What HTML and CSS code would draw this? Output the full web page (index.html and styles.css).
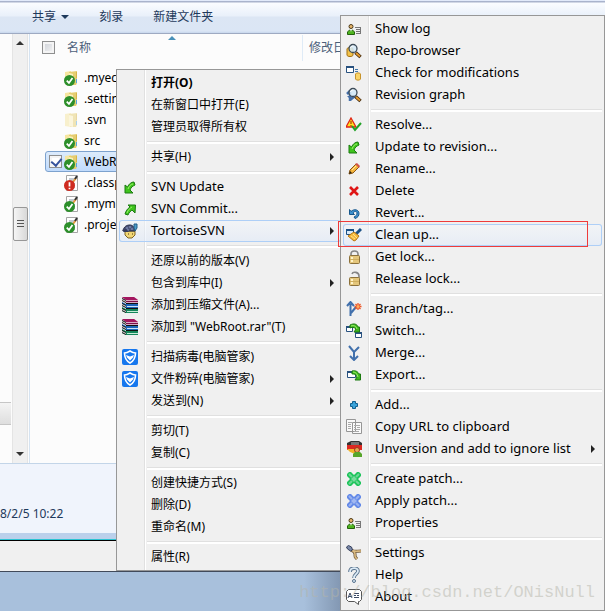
FILE: index.html
```html
<!DOCTYPE html>
<html lang="zh-CN">

<head>
    <meta charset="UTF-8">
    <meta name="viewport" content="width=device-width, initial-scale=1.0">
    <title>TortoiseSVN 右键菜单</title>
    <link rel="stylesheet" href="styles.css">
</head>

<body>
    <!-- 图标 -->
    <svg class="sprite" width="0" height="0">
        <symbol id="ok" viewBox="0 0 10 10">
            <circle cx="5" cy="5" r="5" fill="#2d8f2b"/>
            <path d="M2.5 5.2l2 2 3.2-4.4" fill="none" stroke="#fff" stroke-width="1.6"/>
        </symbol>
        <symbol id="folder" viewBox="0 0 14 16">
            <path d="M1 2l6-1v14l-6-1z" fill="#f6e6a0"/>
            <path d="M5 2l8-1v12l-1 2H6z" fill="#e6cd70"/>
            <path d="M5 3l4 1v11l-4-1z" fill="#fbf0bd"/>
            <path d="M12 9h1v4h-1z" fill="#5aa7e0"/>
            <path d="M12 2h1v6h-1z" fill="#d5b44c"/>
        </symbol>
        <symbol id="doc" viewBox="0 0 14 16">
            <path d="M2.500.5h11v15h-11z" fill="#fff" stroke="#a5a5a5"/>
            <path d="M5 4h6M5 6h4M5 9h6M5 12h6" stroke="#8795a5"/>
            <path d="M6 11l6-8" stroke="#e0993c" stroke-width="2"/>
            <path d="M11 4l2-3" stroke="#333" stroke-width="2"/>
        </symbol>
        <symbol id="update" viewBox="0 0 16 16">
            <path d="M3 6v8h8l-3-3c1-3 3-4 5-5l-1-3C9 3 7 5 5.500 8z" fill="#3fc41c" stroke="#1b7a10"/>
            <path d="M6 10c1-3 3-5 5-5" fill="none" stroke="#9cf26a"/>
        </symbol>
        <symbol id="commit" viewBox="0 0 16 16">
            <path d="M13.500 4H6l2 2c-3 2-4 4-5 7l3 1c1-3 3-4 4-5l3 3z" fill="#3fc41c" stroke="#1b7a10"/>
            <path d="M5 12c1-3 3-5 5-6" fill="none" stroke="#9cf26a"/>
        </symbol>
        <symbol id="tortoise" viewBox="0 0 16 16">
            <path d="M3 8h10v4l-3 3H6l-3-3z" fill="#f2d673" stroke="#7d6224"/>
            <path d="M1 8c1-5 4-6 7-6 3 0 5 3 5 6z" fill="#4b5478" stroke="#272d4a"/>
            <path d="M4 5h2M7 4h2M9 6h2M5 7h2" stroke="#8f9bc8"/>
            <path d="M0 7l4-1 3 3H2z" fill="#363b5c"/>
            <path d="M12 1h3v4l-2 3-1-3z" fill="#4c9bc8" stroke="#205c86"/>
            <path d="M6 11h1M10 11h1" stroke="#4b3816"/>
        </symbol>
        <symbol id="rar" viewBox="0 0 16 16">
            <path d="M0 0h12l4 3v3H4L0 4z" fill="#d7a9c4"/>
            <path d="M0 0h12l4 3H4z" fill="#a3165f"/>
            <path d="M4 4.500h12" stroke="#7c1148"/>
            <path d="M0 5l4 2h12v4H4L0 9z" fill="#1c66b8"/>
            <path d="M5 9.500h11" stroke="#cde2f7"/>
            <path d="M0 10l4 2h12v4H4l-4-2z" fill="#14855a"/>
            <path d="M5 14.500h11" stroke="#c4ecd6"/>
            <path d="M0 1l4 2v3L0 4zM0 6l4 2v3L0 9zM0 11l4 2v3l-4-2z" fill="#1b1b1b"/>
            <path d="M0 2.500l4 2M0 7.500l4 2M0 12.500l4 2" stroke="#ddd"/>
            <path d="M4 6.500h12M4 11.500h12" stroke="#111"/>
        </symbol>
        <symbol id="shield" viewBox="0 0 16 16">
            <rect width="16" height="16" rx="2" fill="#1677ee"/>
            <path d="M2.500 4c2 0 4-1 5.500-2 1.500 1 3.500 2 5.500 2 0 5-2 8-5.500 10C4.500 12 2.500 9 2.500 4z" fill="none" stroke="#fff" stroke-width="1.600"/>
            <path d="M4 6l4 1.500L12 6l-1 2.500-3 3-3-3z" fill="#fff"/>
        </symbol>
        <symbol id="user" viewBox="0 0 16 16">
            <circle cx="5" cy="5.500" r="2" fill="#e7b56a" stroke="#4d3a17"/>
            <path d="M1.500 13.500V11l2-2h3l2 2v2.500z" fill="#4fb51f" stroke="#24610d"/>
            <path d="M4 8l1 3 1-3z" fill="#fff"/>
            <path d="M9 6.500h5M10 8.500h4M10 10.500h4M10 12.500h4M14.500 6v7" stroke="#777"/>
        </symbol>
        <symbol id="lens" viewBox="0 0 16 16">
            <path d="M9.500 9.500l5 4.500" stroke="#3e260c" stroke-width="3.500"/>
            <path d="M10 10l4 3.500" stroke="#e39a2d" stroke-width="2"/>
            <circle cx="7" cy="5.500" r="4" fill="#d3eaf8" fill-opacity=".85" stroke="#3e4c58" stroke-width="1.300"/>
            <path d="M4.500 5c.5-1.500 1.500-2 3-2" fill="none" stroke="#fff"/>
        </symbol>
        <symbol id="repo" viewBox="0 0 16 16">
            <path d="M1 6c0-2 6-2 6 0v6c0 2-6 2-6 0z" fill="#f2c24a" stroke="#a27013"/>
            <use href="#lens"/>
        </symbol>
        <symbol id="check" viewBox="0 0 16 16">
            <path d="M.5 1.500h7v6h-7z" fill="#fff" stroke="#28517f"/>
            <path d="M0 2h8" stroke="#28517f" stroke-width="2"/>
            <path d="M9 4.500h3M9 6.500h3" stroke="#4377a8"/>
            <path d="M9.500 9c0-1.500 5-1.500 5 0v5c0 1.500-5 1.500-5 0z" fill="#fbd467" stroke="#c7932b"/>
        </symbol>
        <symbol id="graph" viewBox="0 0 16 16">
            <path d="M4 14V5M1 7l3-3M4 13l5-4" fill="none" stroke="#446fa9" stroke-width="2.500"/>
            <path d="M1 9h5l-2 3z" fill="#446fa9"/>
            <use href="#lens"/>
        </symbol>
        <symbol id="resolve" viewBox="0 0 16 16">
            <path d="M5 1l5 9H0z" fill="#ffe21f" stroke="#e02314" stroke-width="1.300"/>
            <path d="M5 4v3M5 8v1" stroke="#9c1307"/>
            <path d="M6 9l3 4 6-7" fill="none" stroke="#22a228" stroke-width="2"/>
        </symbol>
        <symbol id="pencil" viewBox="0 0 16 16">
            <path d="M3 13l1-4 6-6 3 3-6 6z" fill="#f5b63c" stroke="#8a5514"/>
            <path d="M9 3l2-1 3 3-1 2z" fill="#d1544a"/>
            <path d="M3 13l1-3 2 2z" fill="#30230f"/>
            <path d="M6 9l4-4" stroke="#ffe6a4"/>
        </symbol>
        <symbol id="delete" viewBox="0 0 16 16">
            <path d="M4 4l8 8M12 4l-8 8" stroke="#df1515" stroke-width="2.600"/>
        </symbol>
        <symbol id="revert" viewBox="0 0 16 16">
            <path d="M3.500 4.500v5h5L7 8c1-2 4-2 4 0s-1 3-3 4l1 1.500c3-1 4-3 4-5 0-4-5-5-8-2z" fill="#3d91cf" stroke="#16568b"/>
        </symbol>
        <symbol id="clean" viewBox="0 0 16 16">
            <path d="M.5 2.500h7v5h-7z" fill="#d8eafa" stroke="#1b5186"/>
            <path d="M0 3h8" stroke="#1b5186" stroke-width="2"/>
            <path d="M10 7l5-5" stroke="#1b5186" stroke-width="3"/>
            <path d="M8 5l5 4-3 4-2 1-6-5z" fill="#f6b93d" stroke="#b87813"/>
            <path d="M5 9l4 3M7 7l4 4" stroke="#ffe18a"/>
        </symbol>
        <symbol id="lock" viewBox="0 0 16 16">
            <path d="M5 7V5c0-4 7-4 7 0v2" fill="none" stroke="#858585" stroke-width="1.600"/>
            <rect x="3.500" y="6.500" width="10" height="8" rx="1" fill="#e4c67b" stroke="#8c713b"/>
            <path d="M6 8v5" stroke="#fff3c9" stroke-width="2"/>
            <path d="M4 10.500h9" stroke="#cfae5f"/>
        </symbol>
        <symbol id="unlock" viewBox="0 0 16 16">
            <path d="M6 3c1-3 7-2 7 2v2" fill="none" stroke="#858585" stroke-width="1.600"/>
            <rect x="3.500" y="6.500" width="10" height="8" rx="1" fill="#e4c67b" stroke="#8c713b"/>
            <path d="M6 8v5" stroke="#fff3c9" stroke-width="2"/>
            <path d="M4 10.500h9" stroke="#cfae5f"/>
        </symbol>
        <symbol id="branch" viewBox="0 0 16 16">
            <path d="M4.500 15V3M1 5l3.500-4L8 5M5 12l5-6" fill="none" stroke="#4170ac" stroke-width="2"/>
            <path d="M12 2v7M8.500 5.500h7M9.500 3l5 5M14.500 3l-5 5" stroke="#ec5526" stroke-width="1.300"/>
            <circle cx="12" cy="5.500" r="1.500" fill="#ffae5e"/>
        </symbol>
        <symbol id="switch" viewBox="0 0 16 16">
            <path d="M.5 3.500h6v5h-6zM9.500 9.500h6v5h-6z" fill="#fff" stroke="#28517f"/>
            <path d="M0 4h7M9 10h7" stroke="#28517f" stroke-width="2"/>
            <path d="M4 2c4-2 7-1 8 2h1.500v5H8l2-3C8 4 6 4 4 5z" fill="#3fb51c" stroke="#1b7a10"/>
            <path d="M5 3c3-1 5 0 6 3" fill="none" stroke="#9cf26a"/>
        </symbol>
        <symbol id="merge" viewBox="0 0 16 16">
            <path d="M3 1l5 6 5-5M8 6v9M4 11l4 4 4-4" fill="none" stroke="#4170ac" stroke-width="2"/>
        </symbol>
        <symbol id="export" viewBox="0 0 16 16">
            <path d="M1.500 4.500h8v6h-8z" fill="#fff" stroke="#28517f"/>
            <path d="M1 5h8" stroke="#28517f" stroke-width="2"/>
            <path d="M6 4c4-1 6 1 7 3h1.500v6H9l2-3C10 7 8 7 6 7z" fill="#3fb51c" stroke="#1b7a10"/>
            <path d="M7 5c3 0 4 2 5 5" fill="none" stroke="#9cf26a"/>
        </symbol>
        <symbol id="add" viewBox="0 0 16 16">
            <path d="M6.500 4.500h3v2h2v3h-2v2h-3v-2h-2v-3h2z" fill="#3aa3da" stroke="#12608f"/>
        </symbol>
        <symbol id="copy" viewBox="0 0 16 16">
            <path d="M.5.5h9v12h-9zM6.500 3.500h9v11h-9z" fill="#fafafa" stroke="#969696"/>
            <path d="M2 3.500h4M2 5.500h3M2 7.500h3M2 9.500h3M8 6.500h6M8 8.500h2M11 8.500h3M8 10.500h6M8 12.500h5" stroke="#aaa"/>
        </symbol>
        <symbol id="ignore" viewBox="0 0 16 16">
            <path d="M1 2l4-2h8l3 2v4H1z" fill="#333"/>
            <path d="M5 1h8v3H5z" fill="#777"/>
            <path d="M1 4h15v5H1z" fill="#dc2922"/>
            <path d="M1 8h10v3l-2 2-5-2z" fill="#f3b52b"/>
            <circle cx="11" cy="9" r="2.500" fill="#e8a657" stroke="#9b3a1c"/>
            <path d="M7 16v-3l2-2h5l2 2v3z" fill="#57a52a"/>
        </symbol>
        <symbol id="patch" viewBox="0 0 16 16">
            <path d="M5 1l3 3 3-3h2l2 2v2l-3 3 3 3v2l-2 2h-2l-3-3-3 3H3l-2-2v-2l3-3-3-3V3l2-2z" fill="currentColor"/>
            <path d="M3 3l3 3M13 3l-3 3M3 13l3-3M13 13l-3-3" stroke="#fff" stroke-opacity=".35" stroke-width="2"/>
            <path d="M8 5l3 3-3 3-3-3z" fill="#fff" fill-opacity=".4"/>
        </symbol>
        <symbol id="settings" viewBox="0 0 16 16">
            <path d="M5 5c3 1 4 2 4 4 0 3 0 3 2 5M5 5c3 2 6 1 10 1" fill="none" stroke="#6d5536" stroke-width="3"/>
            <path d="M5 5c3 1 4 2 4 4 0 3 0 3 2 5M5 5c3 2 6 1 10 1" fill="none" stroke="#dcbc83" stroke-width="1.600"/>
            <path d="M.5 2l2-1.500 3 1.500 1 3-2 1-3-2z" fill="#7a88a8" stroke="#36415d"/>
        </symbol>
        <symbol id="help" viewBox="0 0 16 16">
            <path d="M4 5c0-5 8-5 8-1 0 3-4 3-4 7" fill="none" stroke="#58728c" stroke-width="3.600"/>
            <path d="M4 5c0-5 8-5 8-1 0 3-4 3-4 7" fill="none" stroke="#dcebf7" stroke-width="1.800"/>
            <circle cx="8" cy="14" r="1.500" fill="#dcebf7" stroke="#58728c"/>
        </symbol>
        <symbol id="about" viewBox="0 0 16 16">
            <path d="M2.500.5h11l2 2v8l-2 2h-1v3l-4-3h-6l-2-2v-8z" fill="#fff" stroke="#555"/>
            <path d="M2 9l2-5 2 5M3 7.500h3M8 4.500h5M8 6.500h2M11 6.500h2M8 8.500h5" fill="none" stroke="#3c4a63"/>
        </symbol>
    </svg>

    <div class="window">
        <div class="toolbar">
            <button type="button">共享 <i class="down"></i></button>
            <button type="button">刻录</button>
            <button type="button">新建文件夹</button>
        </div>
        <div class="content">
            <div class="nav"><div class="nav-bar"></div></div>
            <div class="scroll">
                <i class="up"></i>
                <div class="thumb"></div>
                <i class="down"></i>
            </div>
            <div class="files">
                <div class="head">
                    <input type="checkbox" aria-label="全选">
                    <span class="name">名称<i class="sort"></i></span>
                    <span class="date">修改日期</span>
                </div>
                <ul class="list">
                    <li><span class="pic"><svg><use href="#folder"/></svg><svg class="mark"><use href="#ok"/></svg></span>.myeclipse</li>
                    <li><span class="pic"><svg><use href="#folder"/></svg><svg class="mark"><use href="#ok"/></svg></span>.settings</li>
                    <li><span class="pic faded"><svg><use href="#folder"/></svg></span>.svn</li>
                    <li><span class="pic"><svg><use href="#folder"/></svg><svg class="mark"><use href="#ok"/></svg></span>src</li>
                    <li class="selected"><input type="checkbox" aria-label="WebRoot" checked><span class="pic"><svg><use href="#folder"/></svg><svg class="mark"><use href="#ok"/></svg></span>WebRoot</li>
                    <li><span class="pic"><svg><use href="#doc"/></svg><svg class="mark" viewBox="0 0 10 10"><circle cx="5" cy="5" r="5" fill="#cf2b20"/><path d="M5 2v4M5 7v1.500" stroke="#fff" stroke-width="1.600"/></svg></span>.classpath</li>
                    <li><span class="pic"><svg><use href="#doc"/></svg><svg class="mark"><use href="#ok"/></svg></span>.mymetadata</li>
                    <li><span class="pic"><svg><use href="#doc"/></svg><svg class="mark"><use href="#ok"/></svg></span>.project</li>
                </ul>
            </div>
        </div>
        <div class="details">8/2/5 10:22</div>
        <div class="edge"></div>
        <div class="status"></div>
    </div>

    <!-- 右键菜单 -->
    <ul class="menu main" role="menu">
        <li><button type="button"><b>打开(O)</b></button></li>
        <li><button type="button">在新窗口中打开(E)</button></li>
        <li><button type="button">管理员取得所有权</button></li>
        <li class="line"></li>
        <li><button type="button" class="more">共享(H)</button></li>
        <li class="line"></li>
        <li><button type="button" class="en"><svg><use href="#update"/></svg>SVN Update</button></li>
        <li><button type="button" class="en"><svg><use href="#commit"/></svg>SVN Commit...</button></li>
        <li><button type="button" class="en more active"><svg><use href="#tortoise"/></svg>TortoiseSVN</button></li>
        <li class="line"></li>
        <li><button type="button">还原以前的版本(V)</button></li>
        <li><button type="button" class="more">包含到库中(I)</button></li>
        <li><button type="button"><svg><use href="#rar"/></svg>添加到压缩文件(A)...</button></li>
        <li><button type="button"><svg><use href="#rar"/></svg>添加到 "WebRoot.rar"(T)</button></li>
        <li class="line"></li>
        <li><button type="button"><svg><use href="#shield"/></svg>扫描病毒(电脑管家)</button></li>
        <li><button type="button" class="more"><svg><use href="#shield"/></svg>文件粉碎(电脑管家)</button></li>
        <li><button type="button" class="more">发送到(N)</button></li>
        <li class="line"></li>
        <li><button type="button">剪切(T)</button></li>
        <li><button type="button">复制(C)</button></li>
        <li class="line"></li>
        <li><button type="button">创建快捷方式(S)</button></li>
        <li><button type="button">删除(D)</button></li>
        <li><button type="button">重命名(M)</button></li>
        <li class="line"></li>
        <li><button type="button">属性(R)</button></li>
    </ul>

    <!-- TortoiseSVN 子菜单 -->
    <ul class="menu sub" role="menu">
        <li><button type="button" class="en"><svg><use href="#user"/></svg>Show log</button></li>
        <li><button type="button" class="en"><svg><use href="#repo"/></svg>Repo-browser</button></li>
        <li><button type="button" class="en"><svg><use href="#check"/></svg>Check for modifications</button></li>
        <li><button type="button" class="en"><svg><use href="#graph"/></svg>Revision graph</button></li>
        <li class="line"></li>
        <li><button type="button" class="en"><svg><use href="#resolve"/></svg>Resolve...</button></li>
        <li><button type="button" class="en"><svg><use href="#update"/></svg>Update to revision...</button></li>
        <li><button type="button" class="en"><svg><use href="#pencil"/></svg>Rename...</button></li>
        <li><button type="button" class="en"><svg><use href="#delete"/></svg>Delete</button></li>
        <li><button type="button" class="en"><svg><use href="#revert"/></svg>Revert...</button></li>
        <li class="framed"><button type="button" class="en active"><svg><use href="#clean"/></svg>Clean up...</button></li>
        <li><button type="button" class="en"><svg><use href="#lock"/></svg>Get lock...</button></li>
        <li><button type="button" class="en"><svg><use href="#unlock"/></svg>Release lock...</button></li>
        <li class="line"></li>
        <li><button type="button" class="en"><svg><use href="#branch"/></svg>Branch/tag...</button></li>
        <li><button type="button" class="en"><svg><use href="#switch"/></svg>Switch...</button></li>
        <li><button type="button" class="en"><svg><use href="#merge"/></svg>Merge...</button></li>
        <li><button type="button" class="en"><svg><use href="#export"/></svg>Export...</button></li>
        <li class="line"></li>
        <li><button type="button" class="en"><svg><use href="#add"/></svg>Add...</button></li>
        <li><button type="button" class="en"><svg><use href="#copy"/></svg>Copy URL to clipboard</button></li>
        <li><button type="button" class="en more"><svg><use href="#ignore"/></svg>Unversion and add to ignore list</button></li>
        <li class="line"></li>
        <li><button type="button" class="en"><svg class="green"><use href="#patch"/></svg>Create patch...</button></li>
        <li><button type="button" class="en"><svg class="blue"><use href="#patch"/></svg>Apply patch...</button></li>
        <li><button type="button" class="en"><svg><use href="#user"/></svg>Properties</button></li>
        <li class="line"></li>
        <li><button type="button" class="en"><svg><use href="#settings"/></svg>Settings</button></li>
        <li><button type="button" class="en"><svg><use href="#help"/></svg>Help</button></li>
        <li><button type="button" class="en"><svg><use href="#about"/></svg>About</button></li>
    </ul>

    <div class="watermark">http://blog.csdn.net/ONisNull</div>
</body>

</html>
```

FILE: styles.css
```css
* {
    box-sizing: border-box;
}

body {
    position: relative;
    margin: 0;
    min-height: 100vh;
    overflow: hidden;
    background: linear-gradient(90deg, #a8c0dc 304px, #8398b3 340px);
    font-family: "Noto Sans", "Noto Sans CJK SC", sans-serif;
    font-size: 12px;
    line-height: 20px;
    color: #000;
}

ul {
    margin: 0;
    padding: 0;
    list-style: none;
}

button {
    border: none;
    background: none;
    font: inherit;
    color: inherit;
    text-align: left;
    white-space: nowrap;
}

.sprite {
    position: absolute;
}

/* 资源管理器窗口 */
.window {
    overflow: hidden;
    border-bottom: 1px solid #414a5a;
}

.toolbar {
    display: flex;
    gap: 30px;
    height: 34px;
    padding: 6px 32px;
    border-top: 1px solid #e2eafa;
    border-bottom: 1px solid #9eaac2;
    background: linear-gradient(#a9b3cc 1px, #fafcff 2px, #e9f0fa 15px, #dce6f4 16px, #dbe6f5 30px, #c7d7ec);
    color: #1e395b;
}

.toolbar button {
    padding: 0;
}

.toolbar .down {
    display: inline-block;
    margin-left: 2px;
    vertical-align: 2px;
    border: 4px solid transparent;
    border-top-color: #1e395b;
    border-bottom: none;
}

.content {
    display: flex;
    height: 429px;
    background: #fcfcfc;
}

.nav {
    display: flex;
    align-items: flex-end;
    width: 12px;
    padding-bottom: 38px;
}

.nav-bar {
    width: 11px;
    height: 23px;
    border: 1px solid #c6c6c6;
    border-width: 1px 0;
    background: linear-gradient(#f4f4f4, #dedede);
}

.scroll {
    display: flex;
    flex-direction: column;
    align-items: center;
    justify-content: space-between;
    width: 16px;
    padding: 7px 0;
    border: 1px solid #e4e4e4;
    border-width: 0 1px;
    background: #f0f0f0;
}

.scroll .up,
.scroll .down {
    border: 4px solid transparent;
    border-bottom: 4px solid #333;
    border-top: none;
}

.scroll .down {
    border-top: 4px solid #333;
    border-bottom: none;
}

.thumb {
    width: 15px;
    height: 34px;
    margin-top: -50px;
    border: 1px solid #979797;
    border-radius: 2px;
    background:
        repeating-linear-gradient(#555 0 1px, transparent 1px 3px) center / 7px 7px no-repeat,
        linear-gradient(90deg, #f5f5f5, #d8d8d8);
}

.files {
    flex: 1;
    margin-left: 1px;
    border-left: 1px solid #d5e3f1;
}

.head {
    display: flex;
    align-items: center;
    height: 27px;
    padding-left: 12px;
    color: #4c607a;
}

input[type=checkbox] {
    appearance: none;
    width: 13px;
    height: 13px;
    margin: 0;
    border: 1px solid #8e8f8f;
    background: linear-gradient(135deg, #cbcfd5, #f6f6f6);
    box-shadow: inset 0 0 0 2px #f4f4f4;
}

.head .name {
    position: relative;
    width: 235px;
    margin-left: 12px;
}

.sort {
    position: absolute;
    left: 101px;
    top: -2px;
    border: 4px solid transparent;
    border-bottom-color: #4990b8;
    border-top: none;
}

.head .date {
    padding-left: 6px;
    border-left: 1px solid #dfebf7;
    line-height: 26px;
}

.list {
    padding: 6px 0 0 15px;
}

.list li {
    display: flex;
    align-items: center;
    height: 21px;
    padding-left: 19px;
}

.list .selected {
    padding-left: 3px;
    border: 1px solid #7da2ce;
    border-radius: 3px;
    background: linear-gradient(#dcebfc, #c1dbfc);
}

.selected input {
    margin-right: 2px;
    background: #fff;
}

.selected input::before {
    content: "";
    display: block;
    width: 5px;
    height: 8px;
    margin-left: 3px;
    border: solid #35529c;
    border-width: 0 2px 2px 0;
    transform: rotate(40deg);
}

.pic {
    position: relative;
    width: 14px;
    height: 16px;
    margin-right: 6px;
}

.pic svg {
    display: block;
    width: 14px;
    height: 16px;
}

.pic .mark {
    position: absolute;
    left: 0;
    bottom: 0;
    width: 11px;
    height: 11px;
}

.faded {
    opacity: .5;
}

.details {
    height: 70px;
    padding-top: 40px;
    border-top: 1px solid #c3d5e8;
    background: #f0f4fc;
    color: #1e395b;
}

.edge {
    height: 8px;
    border-bottom: 1px solid #000;
    background: linear-gradient(#bbd0eb 6px, #2cc2d2 6px);
}

.status {
    height: 30px;
    background: #f0f0f0;
}

/* 菜单 */
.menu {
    position: absolute;
    padding: 2px;
    border: 1px solid #979797;
    background: linear-gradient(90deg, #f0f0f0 27px, #e0e0e0 27px 28px, #fff 28px 29px, #f0f0f0 29px);
}

.main {
    left: 116px;
    top: 69px;
    width: 228px;
}

.sub {
    left: 340px;
    right: 0;
    top: 15px;
}

.menu button {
    position: relative;
    display: block;
    width: 100%;
    height: 22px;
    padding: 0 0 0 32px;
}

.menu .en {
    padding-bottom: 2px;
    font-size: 13px;
}

.menu svg {
    position: absolute;
    left: 3px;
    top: 3px;
    width: 16px;
    height: 16px;
}

.menu .line {
    height: 8px;
    padding: 3px 0 3px 28px;
}

.menu .line::before {
    content: "";
    display: block;
    height: 2px;
    border-top: 1px solid #e0e0e0;
    background: #fff;
}

.menu .more::after {
    content: "";
    position: absolute;
    right: 7px;
    top: 7px;
    border: 4px solid transparent;
    border-left-color: #222;
    border-right: none;
}

.menu .active {
    border-radius: 3px;
    background: linear-gradient(rgba(245, 248, 252, .5), rgba(220, 232, 250, .5));
    box-shadow: inset 0 0 0 1px #aecff7;
}

.framed {
    position: relative;
}

.framed::after {
    content: "";
    position: absolute;
    left: -5px;
    right: 14px;
    top: -3px;
    bottom: -1px;
    border: 1px solid #ee3b3b;
}

.green {
    color: #1fc45c;
}

.blue {
    color: #6389e8;
}

.watermark {
    position: absolute;
    right: 10px;
    bottom: 8px;
    font-family: "Liberation Mono", monospace;
    font-size: 17px;
    color: rgba(180, 180, 168, .5);
    pointer-events: none;
}
```
